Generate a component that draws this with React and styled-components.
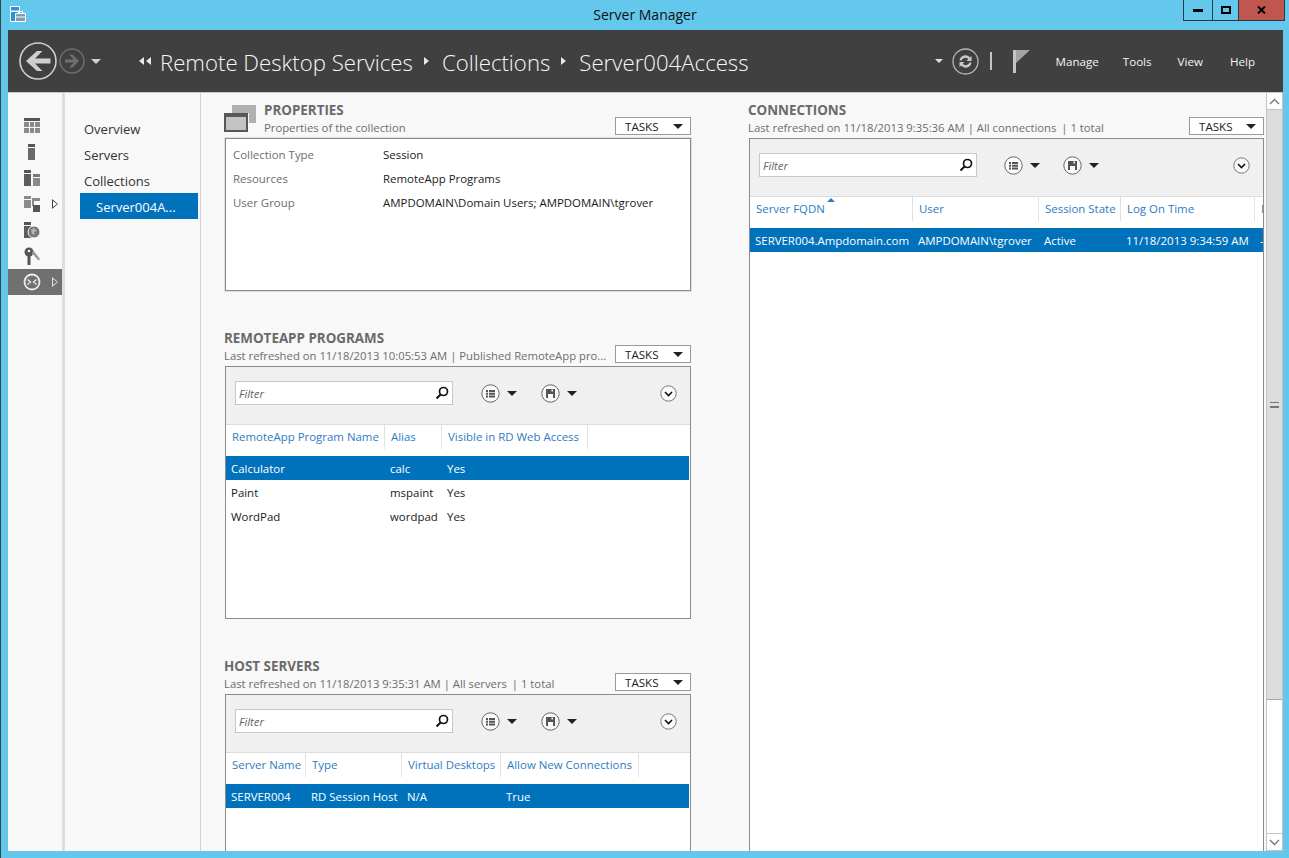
import React from 'react';
import styled, { createGlobalStyle } from 'styled-components';

const GlobalStyle = createGlobalStyle`
  html, body {
    margin: 0;
    padding: 0;
    overflow: hidden;
  }
  body {
    font-family: "Open Sans", "Liberation Sans", sans-serif;
    font-size: 11.3px;
    color: #1a1a1a;
  }
  * { box-sizing: border-box; }
`;

const Win = styled.div`
  width: 1289px;
  height: 858px;
  background: #63c8eb;
  border-left: 1px solid #2f4650;
  display: flex;
  flex-direction: column;
  overflow: hidden;
`;

const TitleBar = styled.div`
  height: 30px;
  flex: none;
  display: grid;
  grid-template-columns: 1fr auto 1fr;
  padding-right: 4px;
`;

const AppIcon = styled.div`
  padding: 6px 0 0 9px;
  line-height: 0;
`;

const Caption = styled.div`
  font-size: 14px;
  line-height: 29px;
  padding-left: 4px;
  color: #111;
`;

const Controls = styled.div`
  justify-self: end;
  display: flex;
  height: 21px;
  border: 1px solid #2b3a40;
  border-top: none;
`;

const Control = styled.div`
  width: ${p => p.$w}px;
  display: flex;
  align-items: center;
  justify-content: center;
  border-left: ${p => (p.$first ? 'none' : '1px solid #2b3a40')};
  background: ${p => (p.$close ? '#c0574e' : 'transparent')};
`;

const Shell = styled.div`
  flex: 1;
  min-height: 0;
  margin: 0 6px 7px 7px;
  display: flex;
  flex-direction: column;
`;

const Header = styled.div`
  height: 63px;
  flex: none;
  background: #404040;
  border-bottom: 1px solid #c8c8c8;
  display: flex;
  align-items: center;
  color: #fff;
  padding-left: 11px;
`;

const NavButtons = styled.div`
  display: flex;
  align-items: center;
  gap: 2px;
  width: 120px;
  flex: none;
`;

const NavDrop = styled.span`
  width: 0;
  height: 0;
  border-left: 5px solid transparent;
  border-right: 5px solid transparent;
  border-top: 5px solid #d0d0d0;
  margin-left: 4px;
`;

const Crumbs = styled.div`
  display: flex;
  align-items: center;
  flex: 1;
  padding-top: 2px;
  font-size: 22.2px;
  font-weight: 300;
  color: #f8f8f8;
`;

const CrumbArrow = styled.span`
  width: 0;
  height: 0;
  border-top: 4px solid transparent;
  border-bottom: 4px solid transparent;
  border-left: 5px solid #e8e8e8;
  margin: -2px 13px 0 11px;
`;

const CrumbBack = styled.span`
  display: inline-flex;
  gap: 2px;
  margin: -2px 9px 0 0;
`;

const CrumbBackArrow = styled.span`
  width: 0;
  height: 0;
  border-top: 4px solid transparent;
  border-bottom: 4px solid transparent;
  border-right: 5px solid #e8e8e8;
`;

const HeaderRight = styled.div`
  display: flex;
  align-items: center;
  padding-right: 28px;
`;

const TinyArrow = styled.span`
  width: 0;
  height: 0;
  border-left: 4px solid transparent;
  border-right: 4px solid transparent;
  border-top: 4px solid #e0e0e0;
  margin-right: 9px;
`;

const VBar = styled.span`
  width: 2px;
  height: 18px;
  background: #c4c4c4;
  margin: 0 21px 0 11px;
`;

const Menu = styled.span`
  font-size: 11.6px;
  color: #f4f4f4;
  margin-left: ${p => p.$left}px;
`;

const Body = styled.div`
  flex: 1;
  min-height: 0;
  display: flex;
  background: #f8f8f8;
`;

const Rail = styled.div`
  width: 54px;
  flex: none;
  padding-top: 20px;
`;

const RailItem = styled.div`
  height: 26px;
  display: flex;
  align-items: center;
  padding-left: 14px;
  background: ${p => (p.$active ? '#707070' : 'transparent')};
`;

const RailIconBox = styled.div`
  width: 20px;
  height: 18px;
  line-height: 0;
`;

const RailArrow = styled.span`
  width: 0;
  height: 0;
  margin-left: 10px;
  border-top: 5px solid transparent;
  border-bottom: 5px solid transparent;
  border-left: 6px solid ${p => (p.$active ? '#e4e4e4' : '#444')};
  position: relative;
  &::after {
    content: '';
    position: absolute;
    left: -5px;
    top: -3px;
    border-top: 3px solid transparent;
    border-bottom: 3px solid transparent;
    border-left: 4px solid ${p => (p.$active ? '#707070' : '#f8f8f8')};
  }
`;

const Nav = styled.div`
  width: 139px;
  flex: none;
  padding: 23px 2px 0 15px;
  border-left: 3px solid #dedede;
  border-right: 1px solid #d2d2d2;
`;

const NavItem = styled.div`
  height: 26px;
  line-height: ${p => (p.$active ? 28 : 26)}px;
  margin-top: ${p => (p.$active ? -1 : 0)}px;
  font-size: 13px;
  padding-left: ${p => (p.$active ? 16 : 4)}px;
  color: ${p => (p.$active ? '#fff' : '#333')};
  background: ${p => (p.$active ? '#0072bc' : 'transparent')};
`;

const Main = styled.div`
  flex: 1;
  min-width: 0;
  display: flex;
  padding-left: 23px;
`;

const Column = styled.div`
  width: ${p => p.$w}px;
  flex: none;
  display: flex;
  flex-direction: column;
  padding-top: 8px;
  margin-right: ${p => p.$gap || 0}px;
`;

const Section = styled.section`
  display: flex;
  flex-direction: column;
  min-height: 0;
  flex: ${p => (p.$fill ? 1 : 'none')};
  margin-bottom: ${p => (p.$fill ? 0 : 38)}px;
`;

const SectionHead = styled.div`
  height: 37px;
  flex: none;
  display: flex;
`;

const SectionIcon = styled.div`
  width: 40px;
  flex: none;
  padding-top: 4px;
  line-height: 0;
`;

const SectionText = styled.div`
  flex: 1;
  min-width: 0;
`;

const SectionTitle = styled.div`
  font-size: 13.4px;
  font-weight: 700;
  line-height: 18px;
  color: #6a6a6a;
`;

const SectionSub = styled.div`
  line-height: 17px;
  color: #6d6d6d;
  white-space: pre;
`;

const TasksButton = styled.div`
  width: ${p => p.$w}px;
  height: 18px;
  flex: none;
  align-self: flex-end;
  margin-bottom: 3px;
  background: #fff;
  border: 1px solid #9a9a9a;
  display: flex;
  align-items: center;
  justify-content: space-between;
  padding: 0 7px 0 9px;
  font-size: 11.6px;
  color: #222;
`;

const DropArrow = styled.span`
  width: 0;
  height: 0;
  border-left: 5px solid transparent;
  border-right: 5px solid transparent;
  border-top: 5px solid #222;
`;

const Box = styled.div`
  margin-left: 1px;
  height: ${p => (p.$h ? `${p.$h}px` : 'auto')};
  flex: ${p => (p.$h ? 'none' : 1)};
  min-height: 0;
  background: #fff;
  border: 1px solid #8c8c8c;
  border-bottom: ${p => (p.$h ? '1px solid #8c8c8c' : 'none')};
  box-shadow: ${p => (p.$shadow ? '0 0 0 1px #dfdfdf' : 'none')};
  overflow: hidden;
`;

const PropGrid = styled.div`
  display: grid;
  grid-template-columns: 150px 1fr;
  grid-auto-rows: 24px;
  padding: 3px 7px;
  align-items: center;
  font-size: 11.45px;
`;

const PropLabel = styled.div`
  color: #6d6d6d;
`;

const PropValue = styled.div`
  color: #1a1a1a;
`;

const Toolbar = styled.div`
  height: 58px;
  background: #f0f0f0;
  border-bottom: 1px solid #dcdcdc;
  display: flex;
  align-items: flex-start;
  padding: 14px 13px 0 9px;
`;

const FilterBox = styled.div`
  width: 218px;
  height: 24px;
  flex: none;
  background: #fff;
  border: 1px solid #c8c8c8;
  display: flex;
  align-items: center;
  justify-content: space-between;
  padding: 0 3px 0 3px;
  font-style: italic;
  color: #666;
`;

const ToolGroup = styled.div`
  display: flex;
  align-items: center;
  height: 24px;
  gap: 7px;
  margin-left: ${p => p.$left}px;
`;

const ToolArrow = styled.span`
  width: 0;
  height: 0;
  border-left: 5px solid transparent;
  border-right: 5px solid transparent;
  border-top: 5px solid #222;
`;

const ExpandSlot = styled.div`
  margin-left: auto;
  height: 24px;
  display: flex;
  align-items: center;
`;

const HeadRow = styled.div`
  display: grid;
  grid-template-columns: ${p => p.$cols};
  height: 31px;
  align-items: start;
  white-space: nowrap;
  overflow: hidden;
  font-size: 11.45px;
`;

const HeadCell = styled.div`
  height: 24px;
  line-height: 24px;
  padding-left: 6px;
  color: #2e7bbf;
  border-right: ${p => (p.$open ? 'none' : '1px solid #e2e2e2')};
  overflow: hidden;
  position: relative;
`;

const SortMark = styled.span`
  position: absolute;
  top: 1px;
  left: 77px;
  width: 0;
  height: 0;
  border-left: 4px solid transparent;
  border-right: 4px solid transparent;
  border-bottom: 4px solid #2e7bbf;
`;

const Row = styled.div`
  display: grid;
  grid-template-columns: ${p => p.$cols};
  height: 24px;
  line-height: 25px;
  margin-right: ${p => (p.$flush ? 0 : 1)}px;
  white-space: nowrap;
  overflow: hidden;
  font-size: 11.45px;
  color: ${p => (p.$selected ? '#fff' : '#1a1a1a')};
  background: ${p => (p.$selected ? '#0072bc' : 'transparent')};
`;

const Cell = styled.div`
  padding-left: 5px;
  overflow: hidden;
`;

const ScrollBar = styled.div`
  width: 17px;
  flex: none;
  margin-left: 2px;
  background: #fff;
  border-left: 1px solid #c4c4c4;
  border-right: 1px solid #c4c4c4;
  border-bottom: 1px solid #c4c4c4;
  display: flex;
  flex-direction: column;
`;

const ScrollBtn = styled.div`
  height: 17px;
  flex: none;
  display: flex;
  align-items: center;
  justify-content: center;
  border-bottom: ${p => (p.$up ? '1px solid #c4c4c4' : 'none')};
  border-top: ${p => (p.$up ? 'none' : '1px solid #c4c4c4')};
`;

const ScrollThumb = styled.div`
  height: 590px;
  flex: none;
  background: #dcdcdc;
  border-bottom: 1px solid #a8a8a8;
  display: flex;
  align-items: center;
  justify-content: center;
`;

const Grip = styled.div`
  width: 9px;
  height: 6px;
  border-top: 1px solid #777;
  border-bottom: 1px solid #777;
  position: relative;
  &::after {
    content: '';
    position: absolute;
    left: 0;
    right: 0;
    top: 1px;
    height: 2px;
    border-bottom: 1px solid #777;
  }
`;

const Grow = styled.div`
  flex: 1;
`;

const AppLogo = () => (
  <svg width="17" height="17" viewBox="0 0 17 17">
    <path d="M.5.500h9v15h-9z" fill="#2a93da" stroke="#fff" />
    <path d="M1 4.500h8v1.500H1z" fill="#fff" />
    <path d="M5.500 7.500h10v8h-10z" fill="#7d9db3" stroke="#fff" />
    <path d="M8.500 7V5.500h4V7M6 11h9" fill="none" stroke="#fff" />
  </svg>
);

const BackIcon = () => (
  <svg width="38" height="38" viewBox="0 0 38 38">
    <circle cx="19" cy="19" r="18" fill="none" stroke="#cfcfcf" strokeWidth="1.600" />
    <path d="M7 19 18 9h5.500L16 16.500h15.500v5H16l7.500 7.500H18z" fill="#cfcfcf" />
  </svg>
);

const ForwardIcon = () => (
  <svg width="26" height="26" viewBox="0 0 26 26">
    <circle cx="13" cy="13" r="12" fill="none" stroke="#6e6e6e" strokeWidth="1.500" />
    <path d="M20 13l-6.500-6.500h-3.500l4.800 5H6v3h8.800l-4.800 5h3.500z" fill="#6e6e6e" />
  </svg>
);

const RefreshIcon = () => (
  <svg width="27" height="27" viewBox="0 0 27 27">
    <circle cx="13.500" cy="13.500" r="12.500" fill="none" stroke="#b8b8b8" strokeWidth="1.300" />
    <path d="M7.500 12.500a6 6 0 0 1 10.500-3l1.500-1.500v5h-5l1.800-1.800a4 4 0 0 0-6.800 1.300z" fill="#c8c8c8" />
    <path d="M19.500 14.500a6 6 0 0 1-10.500 3l-1.500 1.500v-5h5l-1.800 1.800a4 4 0 0 0 6.800-1.300z" fill="#c8c8c8" />
  </svg>
);

const FlagIcon = () => (
  <svg width="17" height="23" viewBox="0 0 17 23">
    <path d="M0 0h3v23H0z" fill="#c4c4c4" />
    <path d="M3 0h14L3 13z" fill="#a4a4a4" />
  </svg>
);

const railIcons = [
  <>
    <path d="M2 1h16v3H2z" fill="#555" />
    <path d="M2 5h5v5H2zM8 5h4v5H8zM13 5h5v5h-5zM2 11h5v5H2zM8 11h4v5H8zM13 11h5v5h-5z" fill="#8a8a8a" />
  </>,
  <>
    <path d="M6 1h7v3H6z" fill="#555" />
    <path d="M6 5h7v12H6z" fill="#6a6a6a" />
  </>,
  <>
    <path d="M2 1h7v3H2z" fill="#555" />
    <path d="M2 5h7v12H2z" fill="#5c5c5c" />
    <path d="M11 5h7v3h-7z" fill="#777" />
    <path d="M11 9h7v8h-7z" fill="#8a8a8a" />
  </>,
  <>
    <path d="M2 1h7v3H2z" fill="#8a8a8a" />
    <path d="M2 5h7v8H2z" fill="#8a8a8a" />
    <path d="M10 3h8v3h-8zM10 6h2v5h-2z" fill="#8a8a8a" />
    <path d="M11 10h7v7h-7z" fill="#555" />
  </>,
  <>
    <path d="M2 1h7v3H2z" fill="#555" />
    <path d="M2 5h7v12H2z" fill="#5c5c5c" />
    <circle cx="12" cy="11" r="6" fill="#777" stroke="#f8f8f8" />
    <path d="M9 9l3-2 3 3-3 1 1 3-3-1z" fill="#b4b4b4" />
  </>,
  <>
    <circle cx="7" cy="5" r="4.500" fill="#555" />
    <circle cx="7" cy="4" r="1.300" fill="#f8f8f8" />
    <path d="M5.500 9h3v9h-3z" fill="#555" />
    <path d="M11 3l7 9-1.500 1.500-6.500-7z" fill="#999" />
  </>,
  <>
    <circle cx="10" cy="9" r="7.500" fill="#707070" stroke="#ececec" strokeWidth="1.800" />
    <path d="M5.500 6.500 8.500 9l-3 2.500M14.500 6.500 11.500 9l3 2.500" fill="none" stroke="#ececec" strokeWidth="1.300" />
  </>,
];

const PropertiesIcon = () => (
  <svg width="32" height="27" viewBox="0 0 32 27">
    <path d="M8 0h24v18h-7V8H8z" fill="#b0b0b0" />
    <rect x="1" y="9" width="22" height="17" fill="#c4c4c4" stroke="#585858" strokeWidth="2" />
    <path d="M2 10h20v2H2z" fill="#5a5a5a" />
  </svg>
);

const SearchIcon = () => (
  <svg width="14" height="14" viewBox="0 0 14 14">
    <circle cx="8.500" cy="5.500" r="4" fill="none" stroke="#111" strokeWidth="1.700" />
    <path d="M5.500 8.500 1.500 12.500" stroke="#111" strokeWidth="2" />
  </svg>
);

const ListIcon = () => (
  <svg width="19" height="19" viewBox="0 0 19 19">
    <circle cx="9.500" cy="9.500" r="8.700" fill="#fafafa" stroke="#666" strokeWidth="1" />
    <path d="M5 6h2v2H5zM5 8.700h2v2H5zM5 11.400h2v2H5zM8 6h6v2H8zM8 8.700h6v2H8zM8 11.400h6v2H8z" fill="#555" />
  </svg>
);

const SaveIcon = () => (
  <svg width="19" height="19" viewBox="0 0 19 19">
    <circle cx="9.500" cy="9.500" r="8.700" fill="#fafafa" stroke="#666" strokeWidth="1" />
    <path d="M5 5h9v9H5z" fill="#555" />
    <path d="M10.500 5.500h1.500v2h-1.500zM7 10h5v4H7z" fill="#fafafa" />
  </svg>
);

const ExpandIcon = () => (
  <svg width="17" height="17" viewBox="0 0 17 17">
    <circle cx="8.500" cy="8.500" r="7.700" fill="#fafafa" stroke="#777" strokeWidth="1" />
    <path d="M5 7l3.500 3.500L12 7" fill="none" stroke="#111" strokeWidth="1.600" />
  </svg>
);

const ChevronIcon = ({ up }) => (
  <svg width="11" height="7" viewBox="0 0 11 7">
    <path d={up ? 'M1 6l4.500-4.500L10 6' : 'M1 1l4.500 4.500L10 1'} fill="none" stroke="#777" strokeWidth="1.400" />
  </svg>
);

const Tasks = ({ width = 76 }) => (
  <TasksButton $w={width}>
    TASKS
    <DropArrow />
  </TasksButton>
);

const ListTools = ({ first, second }) => (
  <Toolbar>
    <FilterBox>
      Filter
      <SearchIcon />
    </FilterBox>
    <ToolGroup $left={first}>
      <ListIcon />
      <ToolArrow />
    </ToolGroup>
    <ToolGroup $left={second}>
      <SaveIcon />
      <ToolArrow />
    </ToolGroup>
    <ExpandSlot>
      <ExpandIcon />
    </ExpandSlot>
  </Toolbar>
);

const remoteCols = '159px 57px 146px 1fr';
const hostCols = '80px 96px 99px 138px 1fr';
const connCols = '163px 126px 82px 134px 1fr';

const remoteRows = [
  ['Calculator', 'calc', 'Yes'],
  ['Paint', 'mspaint', 'Yes'],
  ['WordPad', 'wordpad', 'Yes'],
];

const App = () => (
  <Win>
    <GlobalStyle />
    <TitleBar>
      <AppIcon>
        <AppLogo />
      </AppIcon>
      <Caption>Server Manager</Caption>
      <Controls>
        <Control $w={28} $first>
          <svg width="10" height="3"><rect width="10" height="3" fill="#000" /></svg>
        </Control>
        <Control $w={26}>
          <svg width="10" height="8"><rect x="1" y="1" width="8" height="6" fill="none" stroke="#000" strokeWidth="2" /></svg>
        </Control>
        <Control $w={46} $close>
          <svg width="9" height="8"><path d="M1 0.500l7 7M8 0.500l-7 7" stroke="#000" strokeWidth="2" /></svg>
        </Control>
      </Controls>
    </TitleBar>
    <Shell>
      <Header>
        <NavButtons>
          <BackIcon />
          <ForwardIcon />
          <NavDrop />
        </NavButtons>
        <Crumbs>
          <CrumbBack>
            <CrumbBackArrow />
            <CrumbBackArrow />
          </CrumbBack>
          Remote Desktop Services
          <CrumbArrow />
          Collections
          <CrumbArrow />
          Server004Access
        </Crumbs>
        <HeaderRight>
          <TinyArrow />
          <RefreshIcon />
          <VBar />
          <FlagIcon />
          <Menu $left={26}>Manage</Menu>
          <Menu $left={24}>Tools</Menu>
          <Menu $left={26}>View</Menu>
          <Menu $left={27}>Help</Menu>
        </HeaderRight>
      </Header>
      <Body>
        <Rail>
          {railIcons.map((icon, i) => (
            <RailItem key={i} $active={i === 6}>
              <RailIconBox>
                <svg width="20" height="18" viewBox="0 0 20 18">{icon}</svg>
              </RailIconBox>
              {(i === 3 || i === 6) && <RailArrow $active={i === 6} />}
            </RailItem>
          ))}
        </Rail>
        <Nav>
          <NavItem>Overview</NavItem>
          <NavItem>Servers</NavItem>
          <NavItem>Collections</NavItem>
          <NavItem $active>Server004A...</NavItem>
        </Nav>
        <Main>
          <Column $w={467} $gap={57}>
            <Section>
              <SectionHead>
                <SectionIcon>
                  <PropertiesIcon />
                </SectionIcon>
                <SectionText>
                  <SectionTitle>PROPERTIES</SectionTitle>
                  <SectionSub>Properties of the collection</SectionSub>
                </SectionText>
                <Tasks />
              </SectionHead>
              <Box $h={153} $shadow>
                <PropGrid>
                  <PropLabel>Collection Type</PropLabel>
                  <PropValue>Session</PropValue>
                  <PropLabel>Resources</PropLabel>
                  <PropValue>RemoteApp Programs</PropValue>
                  <PropLabel>User Group</PropLabel>
                  <PropValue>AMPDOMAIN\Domain Users; AMPDOMAIN\tgrover</PropValue>
                </PropGrid>
              </Box>
            </Section>
            <Section>
              <SectionHead>
                <SectionText>
                  <SectionTitle>REMOTEAPP PROGRAMS</SectionTitle>
                  <SectionSub>Last refreshed on 11/18/2013 10:05:53 AM | Published RemoteApp pro...</SectionSub>
                </SectionText>
                <Tasks />
              </SectionHead>
              <Box $h={253}>
                <ListTools first={28} second={24} />
                <HeadRow $cols={remoteCols}>
                  <HeadCell>RemoteApp Program Name</HeadCell>
                  <HeadCell>Alias</HeadCell>
                  <HeadCell>Visible in RD Web Access</HeadCell>
                  <HeadCell $open />
                </HeadRow>
                {remoteRows.map((row, i) => (
                  <Row key={row[0]} $cols={remoteCols} $selected={i === 0}>
                    {row.map(v => <Cell key={v}>{v}</Cell>)}
                  </Row>
                ))}
              </Box>
            </Section>
            <Section $fill>
              <SectionHead>
                <SectionText>
                  <SectionTitle>HOST SERVERS</SectionTitle>
                  <SectionSub>Last refreshed on 11/18/2013 9:35:31 AM | All servers {'\u2009'}| 1 total</SectionSub>
                </SectionText>
                <Tasks />
              </SectionHead>
              <Box>
                <ListTools first={28} second={24} />
                <HeadRow $cols={hostCols}>
                  <HeadCell>Server Name</HeadCell>
                  <HeadCell>Type</HeadCell>
                  <HeadCell>Virtual Desktops</HeadCell>
                  <HeadCell>Allow New Connections</HeadCell>
                  <HeadCell $open />
                </HeadRow>
                <Row $cols={hostCols} $selected>
                  <Cell>SERVER004</Cell>
                  <Cell>RD Session Host</Cell>
                  <Cell>N/A</Cell>
                  <Cell>True</Cell>
                </Row>
              </Box>
            </Section>
          </Column>
          <Column $w={516}>
            <Section $fill>
              <SectionHead>
                <SectionText>
                  <SectionTitle>CONNECTIONS</SectionTitle>
                  <SectionSub>Last refreshed on 11/18/2013 9:35:36 AM | All connections {'\u2009'}| 1 total</SectionSub>
                </SectionText>
                <Tasks width={75} />
              </SectionHead>
              <Box>
                <ListTools first={27} second={23} />
                <HeadRow $cols={connCols}>
                  <HeadCell>Server FQDN<SortMark /></HeadCell>
                  <HeadCell>User</HeadCell>
                  <HeadCell>Session State</HeadCell>
                  <HeadCell>Log On Time</HeadCell>
                  <HeadCell $open>I</HeadCell>
                </HeadRow>
                <Row $cols={connCols} $selected $flush>
                  <Cell>SERVER004.Ampdomain.com</Cell>
                  <Cell>AMPDOMAIN\tgrover</Cell>
                  <Cell>Active</Cell>
                  <Cell>11/18/2013 9:34:59 AM</Cell>
                  <Cell>-</Cell>
                </Row>
              </Box>
            </Section>
          </Column>
          <ScrollBar>
            <ScrollBtn $up>
              <ChevronIcon up />
            </ScrollBtn>
            <ScrollThumb>
              <Grip />
            </ScrollThumb>
            <Grow />
            <ScrollBtn>
              <ChevronIcon />
            </ScrollBtn>
          </ScrollBar>
        </Main>
      </Body>
    </Shell>
  </Win>
);

export default App;
